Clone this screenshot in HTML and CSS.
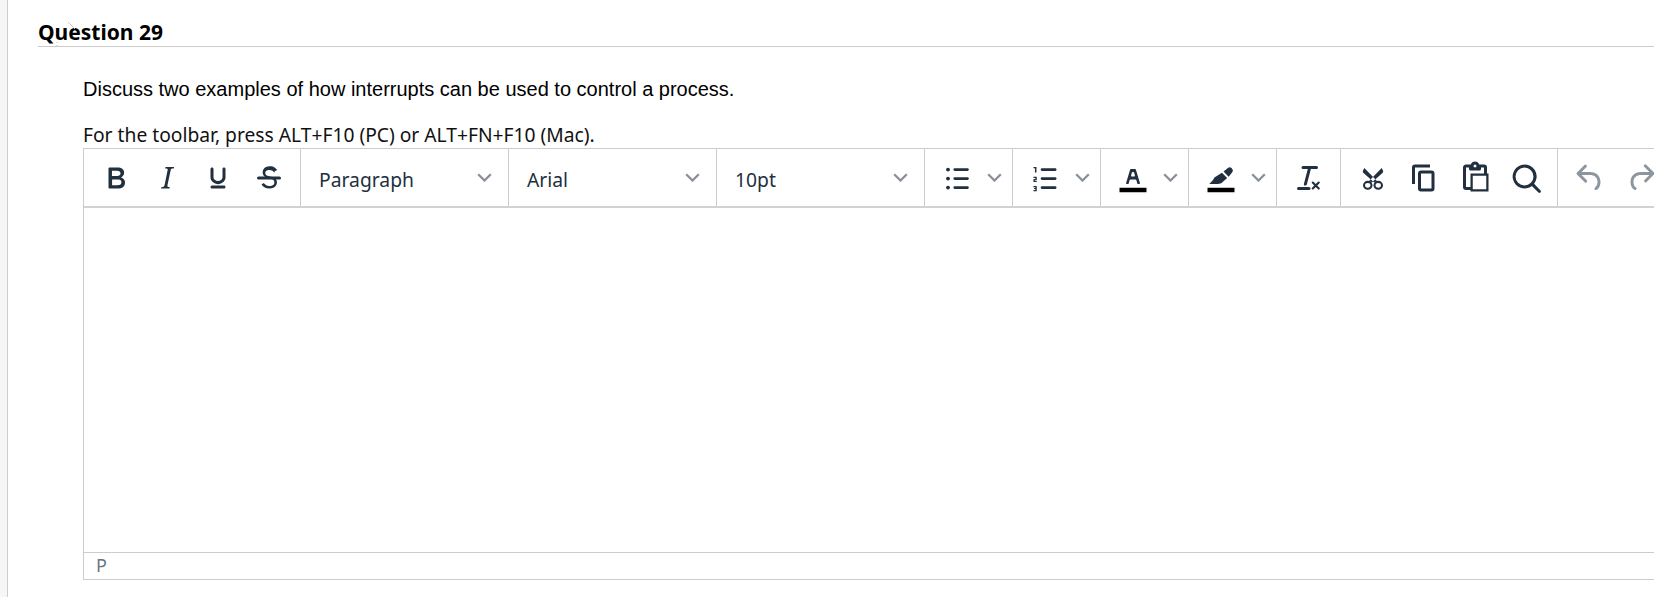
FILE: index.html
```html
<!DOCTYPE html>
<html lang="en">
<head>
<meta charset="utf-8">
<title>Question 29</title>
<link rel="stylesheet" href="styles.css">
</head>
<body>
<div class="page">
  <aside class="rail"></aside>
  <main class="main">
    <svg class="scratch" viewBox="0 0 30 30" aria-hidden="true"><path class="scratch-a" d="M12 1l7 7"/><path class="scratch-b" d="M1 21v6"/></svg>
    <h2 class="qtitle">Question 29</h2>
    <div class="qbody">
      <p class="prompt">Discuss two examples of how interrupts can be used to control a process.</p>
      <p class="hint">For the toolbar, press ALT+F10 (PC) or ALT+FN+F10 (Mac).</p>
      <div class="editor">
        <div class="toolbar">
          <div class="group">
            <span class="btn"><svg class="ico" viewBox="0 0 24 24"><path d="M7.8 19c-.3 0-.5 0-.6-.2l-.2-.5V5.700c0-.2 0-.4.2-.5l.6-.2h5c1.500 0 2.700.3 3.500 1 .7.6 1.100 1.400 1.100 2.500a3 3 0 01-.6 1.900c-.4.6-1 1-1.600 1.200.4.1.9.3 1.300.6s.8.7 1 1.200c.4.4.5 1 .5 1.600 0 1.300-.4 2.300-1.300 3-.8.7-2.100 1-3.800 1H7.800zm5-8.300c.6 0 1.200-.1 1.600-.5.4-.3.6-.7.6-1.300 0-1.100-.8-1.700-2.300-1.700H9.300v3.500h3.400zm.5 6c.7 0 1.300-.1 1.700-.4.4-.4.6-.9.6-1.500s-.2-1-.7-1.400c-.4-.3-1-.4-2-.4H9.400v3.800h4z"/></svg></span>
            <span class="btn"><svg class="ico" viewBox="0 0 24 24"><path d="M16.700 4.700l-.1.9h-.3c-.6 0-1 0-1.400.3-.3.3-.4.6-.5 1.100l-2.100 9.800v.6c0 .5.4.8 1.400.8h.2l-.2.8H8l.2-.8h.2c1.100 0 1.800-.5 2-1.500l2-9.800.1-.5c0-.6-.4-.8-1.400-.8h-.3l.2-.9h5.800z"/></svg></span>
            <span class="btn"><svg class="ico" viewBox="0 0 24 24"><path d="M16 5c.6 0 1 .4 1 1v5.500a4 4 0 01-.4 1.800l-1 1.400a5.300 5.300 0 01-5.500 1 5 5 0 01-1.600-1c-.5-.4-.8-.9-1.100-1.400a4 4 0 01-.4-1.800V6c0-.6.4-1 1-1s1 .4 1 1v5.500c0 .3 0 .6.2 1l.6.7a3.300 3.300 0 002.200.8 3.400 3.400 0 002.200-.8c.3-.2.4-.5.6-.8l.2-.9V6c0-.6.4-1 1-1zM8 17h8c.6 0 1 .4 1 1s-.4 1-1 1H8a1 1 0 010-2z"/></svg></span>
            <span class="btn"><svg class="ico" viewBox="0 0 24 24"><path d="M15.600 8.500c-.5-.7-1-1.100-1.300-1.300-.6-.4-1.300-.6-2-.6-2.700 0-2.800 1.700-2.800 2.100 0 1.600 1.800 2 3.200 2.300 4.400.9 4.600 2.800 4.600 3.900 0 1.400-.7 4.100-5 4.100A6.200 6.200 0 017 16.400l1.500-1.100c.4.6 1.600 2 3.700 2 1.600 0 2.500-.4 3-1 .3-.4.4-.9.4-1.300 0-.8-.2-2-3-2.600-3-.5-4.800-1.700-4.800-4 0-1.200.5-4.200 4.800-4.200 1.500 0 2.400.3 3.300.9.6.3 1 .8 1.500 1.500l-1.700 1z"/><path d="M5 11h14a1 1 0 010 2H5a1 1 0 010-2z"/></svg></span>
          </div>
          <div class="select"><span class="select-text">Paragraph</span><svg class="chev" viewBox="0 0 15 9"><path d="M1.200 1.200L7.500 7.500l6.300-6.300"/></svg></div>
          <div class="select"><span class="select-text">Arial</span><svg class="chev" viewBox="0 0 15 9"><path d="M1.200 1.200L7.500 7.500l6.300-6.300"/></svg></div>
          <div class="select"><span class="select-text">10pt</span><svg class="chev" viewBox="0 0 15 9"><path d="M1.200 1.200L7.500 7.500l6.300-6.300"/></svg></div>
          <div class="group">
            <span class="btn"><svg class="ico" viewBox="0 0 24 24"><path d="M10.500 5.500h8.500c.5 0 .9.4.9.9s-.4.9-.9.9h-8.500a.9.9 0 010-1.800zm0 6h8.500c.5 0 .9.4.9.9s-.4.9-.9.9h-8.500a.9.9 0 010-1.800zm0 6h8.500c.5 0 .9.4.9.9s-.4.9-.9.9h-8.500a.9.9 0 010-1.800z"/><circle cx="6" cy="6.400" r="1.300"/><circle cx="6" cy="12.400" r="1.300"/><circle cx="6" cy="18.400" r="1.300"/></svg></span>
            <span class="caret"><svg class="chev" viewBox="0 0 15 9"><path d="M1.200 1.200L7.500 7.500l6.300-6.300"/></svg></span>
          </div>
          <div class="group">
            <span class="btn"><svg class="ico" viewBox="0 0 24 24"><path d="M10 17.500h8.800c.5 0 .9.4.9.9s-.4.9-.9.9H10a.9.9 0 010-1.800zm0-6h8.800c.5 0 .9.4.9.9s-.4.9-.9.9H10a.9.9 0 010-1.800zm0-6h8.800c.5 0 .9.4.9.9s-.4.9-.9.9H10a.9.9 0 010-1.800z"/><path d="M4.300 4.700h2v3.600H5.300V5.500h-1zM4.300 11.200h2.200v2.100H5.200v.6h1.300v.8H4.300v-2.100h1.300v-.6H4.300zM4.300 17.300h2.200v3.500H4.300V20h1.300v-.6H4.700v-.7h.9v-.6H4.300z"/></svg></span>
            <span class="caret"><svg class="chev" viewBox="0 0 15 9"><path d="M1.200 1.200L7.500 7.500l6.300-6.300"/></svg></span>
          </div>
          <div class="group">
            <span class="btn"><svg class="ico" viewBox="0 0 24 24"><path class="ink" d="M3 18.500h18v3H3z"/><path d="M8.700 16h-.8a.5.5 0 01-.5-.6l2.700-9c.1-.3.3-.4.5-.4h2.800c.2 0 .4.1.5.4l2.700 9a.5.5 0 01-.5.6h-.8a.5.5 0 01-.4-.4l-.7-2.200c0-.3-.3-.4-.5-.4h-3.400c-.2 0-.4.1-.5.4l-.7 2.200c0 .3-.2.4-.4.4zm2.600-7.600l-.6 2a.5.5 0 00.5.6h1.600a.5.5 0 00.5-.6l-.6-2c0-.3-.3-.4-.5-.4h-.4c-.2 0-.4.1-.5.4z"/></svg></span>
            <span class="caret"><svg class="chev" viewBox="0 0 15 9"><path d="M1.200 1.200L7.500 7.500l6.300-6.300"/></svg></span>
          </div>
          <div class="group">
            <span class="btn"><svg class="ico" viewBox="0 0 24 24"><path class="ink" d="M3 18.500h18v3H3z"/><path d="M13.700 7.700l2.900-2.400a1.800 1.800 0 012.400.1l.4.4a1.800 1.800 0 01.1 2.400l-2.400 2.900zM12.600 8.500l3.500 3.500-3.900 3.500-2.200.5H4.200l2.600-2.800.8-1.600z"/></svg></span>
            <span class="caret"><svg class="chev" viewBox="0 0 15 9"><path d="M1.200 1.200L7.500 7.500l6.300-6.300"/></svg></span>
          </div>
          <div class="group">
            <span class="btn"><svg class="ico" viewBox="0 0 24 24"><path d="M13.200 6a1 1 0 010 .2l-2.600 10a1 1 0 01-1 .8h-.2a.8.8 0 01-.8-1l2.600-10H8a1 1 0 110-2h9a1 1 0 010 2h-3.800zM5 18h7a1 1 0 010 2H5a1 1 0 010-2zm13 1.500L16.500 18 15 19.500a.7.7 0 01-1-1l1.500-1.500-1.500-1.500a.7.7 0 011-1l1.500 1.500 1.500-1.500a.7.7 0 011 1L17.500 17l1.500 1.500a.7.7 0 01-1 1z"/></svg></span>
          </div>
          <div class="group">
            <span class="btn"><svg class="ico" viewBox="0 0 24 24"><path d="M6.200 5.400l8.300 8.400-1.500 1.300-7.300-6.500c-.5-.5-.6-.9-.4-1.500zM17.800 5.400l-8.300 8.400 1.500 1.300 7.300-6.500c.5-.5.6-.9.400-1.500z"/><ellipse class="line" cx="8.500" cy="16.900" rx="2.500" ry="2.300"/><ellipse class="line" cx="15.500" cy="16.900" rx="2.500" ry="2.300"/></svg></span>
            <span class="btn"><svg class="ico" viewBox="0 0 24 24"><path d="M16 3H6a2 2 0 00-2 2v11h2V5h10V3zm1 4a2 2 0 012 2v10a2 2 0 01-2 2H10a2 2 0 01-2-2V9c0-1.200.9-2 2-2h7zm0 12V9h-7v10h7z"/></svg></span>
            <span class="btn"><svg class="ico" viewBox="0 0 24 24"><path d="M18 9V5h-2v1c0 .6-.4 1-1 1H9a1 1 0 01-1-1V5H6v13h3V9h9zM9 20H6a2 2 0 01-2-2V5c0-1.100.9-2 2-2h3.200A3 3 0 0112 1a3 3 0 012.800 2H18a2 2 0 012 2v4h1v12H9v-1zm1.500-9.500v9h9v-9h-9zM12 3a1 1 0 00-1 1c0 .5.4 1 1 1s1-.5 1-1-.4-1-1-1z"/></svg></span>
            <span class="btn"><svg class="ico" viewBox="0 0 24 24"><path d="M16 17.300a8 8 0 111.400-1.400l4.300 4.400a1 1 0 01-1.400 1.400l-4.400-4.300zm-5-.3a6 6 0 100-12 6 6 0 000 12z"/></svg></span>
          </div>
          <div class="group group-last">
            <span class="btn muted"><svg class="ico" viewBox="0 0 24 24"><path d="M6.400 8H12c3.700 0 6.200 2 6.800 5.100.6 2.700-.4 5.600-2.300 6.800a1 1 0 01-1-1.800c1.100-.6 1.800-2.700 1.400-4.600-.5-2.100-2.100-3.500-4.900-3.500H6.400l3.300 3.300a1 1 0 11-1.400 1.400l-5-5a1 1 0 010-1.400l5-5a1 1 0 011.400 1.400L6.400 8z"/></svg></span>
            <span class="btn muted"><svg class="ico" viewBox="0 0 24 24"><path d="M17.600 10H12c-2.800 0-4.400 1.400-4.900 3.500-.4 2 .3 4 1.400 4.600a1 1 0 11-1 1.800c-2-1.200-2.900-4.100-2.300-6.800.6-3 3-5.100 6.800-5.100h5.600l-3.300-3.300a1 1 0 111.400-1.400l5 5a1 1 0 010 1.400l-5 5a1 1 0 01-1.400-1.400l3.300-3.300z"/></svg></span>
          </div>
        </div>
        <div class="area"></div>
        <div class="status">P</div>
      </div>
    </div>
  </main>
</div>
</body>
</html>
```
FILE: styles.css
```css
* { box-sizing: border-box; }
html, body { margin: 0; padding: 0; height: 100%; background: #fff; overflow: hidden; }
.page { display: flex; height: 597px; width: 1654px; overflow: hidden; }
.rail { flex: 0 0 8px; background: #f6f6f6; border-right: 1px solid #cdcdcd; }
.main { position: relative; flex: 1; min-width: 0; padding: 16px 0 0 30px; }
.scratch { position: absolute; left: 48px; top: 21px; width: 30px; height: 30px; fill: none; }
.scratch-a { stroke: #c9c9c9; stroke-width: 1; }
.scratch-b { stroke: #bbb; stroke-width: 1; stroke-dasharray: 1 2; }
.qtitle {
  margin: 0; height: 31px;
  font: 700 21px/33px "Noto Sans", "Open Sans", sans-serif; color: #000;
  border-bottom: 1px solid #ccc;
}
.qbody { padding: 0 0 0 45px; }
.prompt {
  margin: 30px 0 0; font: 20px/24px "Liberation Sans", Arial, sans-serif; color: #000;
}
.hint {
  margin: 21px 0 0; height: 26px; font: 19.240px/26px "Noto Sans", "Open Sans", sans-serif; color: #111;
  white-space: nowrap;
}
.editor { width: 1700px; border: 1px solid #ccc; }
.toolbar { display: flex; height: 59px; border-bottom: 2px solid #d2d2d2; }
.group { display: flex; align-items: center; padding: 0 6px; border-right: 1px solid #ccc; flex: none; }
.group-last { border-right: 0; }
.btn { display: flex; align-items: center; justify-content: center; width: 51px; height: 51px; }
.ico { width: 36px; height: 36px; fill: #222f3e; display: block; }
.ico .ink { fill: #000; }
.ico .line { fill: none; stroke: #222f3e; stroke-width: 1.400; }
.muted .ico { fill: #8d96a0; }
.caret { display: flex; align-items: center; justify-content: center; width: 24px; height: 51px; }
.chev { width: 15px; height: 9px; fill: none; stroke: #8a9099; stroke-width: 2.300; display: block; }
.select {
  flex: none; width: 208px; display: flex; align-items: center; justify-content: space-between;
  padding: 0 16px 0 18px; border-right: 1px solid #ccc;
  font: 19.300px/28px "Noto Sans", "Open Sans", sans-serif; color: #222f3e;
}
.select-text { padding-top: 4px; }
.area { height: 345px; border-bottom: 1px solid #ccc; }
.status { height: 26px; padding-left: 12px; font: 18px/25px "Noto Sans", "Open Sans", sans-serif; color: #6b7583; }
```
